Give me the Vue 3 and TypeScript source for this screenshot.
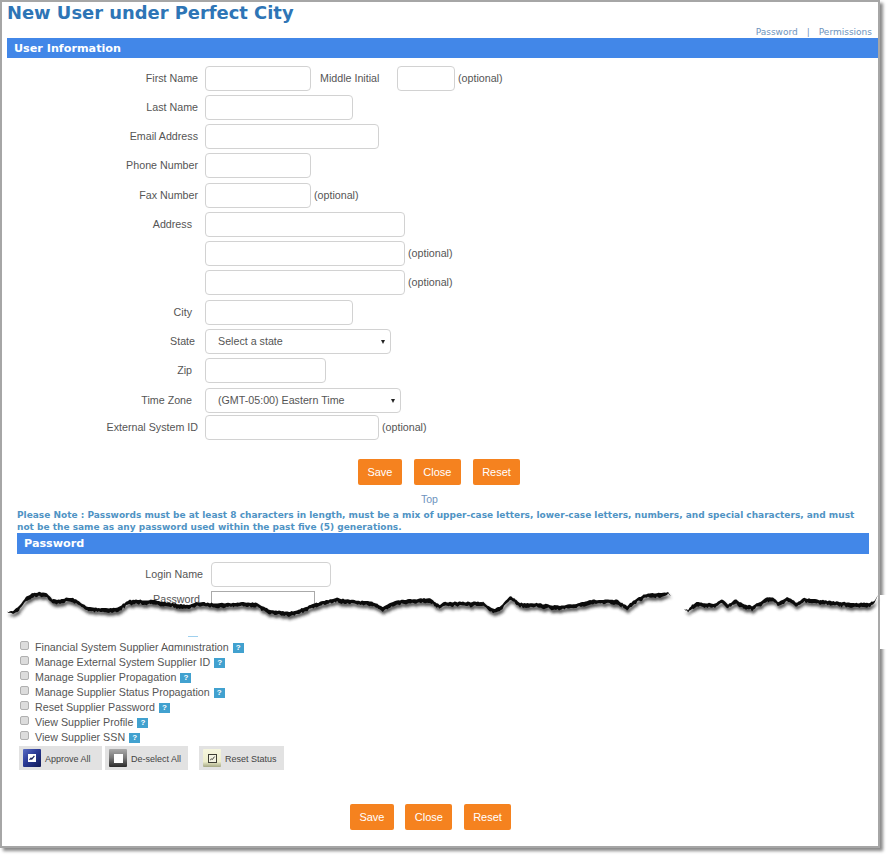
<script setup lang="ts">
interface Field { label: string; pad: number; width: number; kind?: string; text?: string; note?: string; extra: number }
const fields: Field[] = [
  { label: 'First Name', pad: 7, width: 106, extra: 0, kind: 'first' },
  { label: 'Last Name', pad: 7, width: 148, extra: 0 },
  { label: 'Email Address', pad: 7, width: 174, extra: 0 },
  { label: 'Phone Number', pad: 7, width: 106, extra: 0 },
  { label: 'Fax Number', pad: 7, width: 106, extra: 1, note: '(optional)' },
  { label: 'Address', pad: 13, width: 200, extra: 0 },
  { label: '', pad: 13, width: 200, extra: 0, note: '(optional)' },
  { label: '', pad: 13, width: 200, extra: 0, note: '(optional)' },
  { label: 'City', pad: 13, width: 148, extra: 1 },
  { label: 'State', pad: 10, width: 186, extra: 0, kind: 'select', text: 'Select a state' },
  { label: 'Zip', pad: 13, width: 121, extra: 0 },
  { label: 'Time Zone', pad: 13, width: 196, extra: 1, kind: 'select', text: '(GMT-05:00) Eastern Time' },
  { label: 'External System ID', pad: 7, width: 174, extra: -2, note: '(optional)' }
]
const perms = [
  'Financial System Supplier Administration',
  'Manage External System Supplier ID',
  'Manage Supplier Propagation',
  'Manage Supplier Status Propagation',
  'Reset Supplier Password',
  'View Supplier Profile',
  'View Supplier SSN'
]
type P = [number, number]
const seg1: P[] = [[7,612],[13,611],[20,605],[26,597],[33,593],[40,592],[47,593],[52,599],[57,600],[66,598],[73,598],[80,602],[87,607],[100,608],[117,608],[123,604],[130,600],[150,600],[165,602],[178,604],[190,605],[197,602],[210,603],[233,603],[245,602],[257,603],[264,607],[270,610],[280,611],[290,612],[300,609],[317,603],[327,600],[337,598],[350,600],[373,602],[378,604],[383,607],[390,603],[397,600],[415,599],[430,598],[435,602],[440,605],[444,602],[460,602],[483,602],[490,607],[495,609],[501,606],[510,596],[515,599],[520,603],[535,603],[560,606],[575,604],[590,600],[617,600],[622,603],[627,606],[633,601],[645,594],[668,592],[671,596]]
const seg2: P[] = [[684,609],[688,610],[692,605],[697,602],[715,604],[722,599],[728,605],[735,599],[743,604],[752,606],[760,602],[768,597],[773,597],[778,602],[788,597],[797,603],[803,598],[820,600],[840,602],[855,603],[870,603],[875,600],[878,595]]

let seed = 7
const rnd = (): number => {
  seed = (seed * 16807) % 2147483647
  return seed / 2147483647
}
const sample = (pts: P[]): P[] => {
  const out: P[] = []
  for (let i = 0; i < pts.length - 1; i++) {
    const [x0, y0] = pts[i]
    const [x1, y1] = pts[i + 1]
    for (let x = x0; x < x1; x += 1.5) {
      const t = (x - x0) / (x1 - x0)
      out.push([x, y0 + (y1 - y0) * t + (rnd() - 0.5) * 1.1])
    }
  }
  out.push(pts[pts.length - 1])
  return out
}
const fmt = (pts: P[]): string => pts.map(p => p[0].toFixed(1) + ' ' + p[1].toFixed(1)).join('L')
const band = (pts: P[]): string => {
  const s = sample(pts)
  const under: P[] = s.map((p, i) => {
    const edge = Math.min(i, s.length - 1 - i)
    const th = Math.min(edge * 0.7, 3.2 + rnd() * 1.8)
    return [p[0], p[1] + th] as P
  }).reverse()
  return 'M' + fmt(s) + 'L' + fmt(under) + 'Z'
}
const band1 = band(seg1)
const band2 = band(seg2)
const fill = 'M' + fmt(seg1) + 'L' + fmt(seg2) + 'L891 595L891 649L879 649L879 641L200 641L200 645L165 645L165 641L3 641L3 612Z'
</script>

<template>
  <div class="page">
    <div class="frame">
      <h1 class="title">New User under Perfect City</h1>
      <div class="links">
        <a>Password</a><span class="sep">|</span><a>Permissions</a>
      </div>
      <h2 class="bar">User Information</h2>
      <div class="form">
        <div
          v-for="(f, i) in fields"
          :key="i"
          class="row"
          :style="{ marginTop: f.extra + 'px' }"
        >
          <label class="label" :style="{ paddingRight: f.pad + 'px' }">{{ f.label }}</label>
          <span v-if="f.kind === 'select'" class="select" :style="{ width: f.width + 'px' }">{{ f.text }}</span>
          <input v-else class="input" type="text" :style="{ width: f.width + 'px' }" />
          <span v-if="f.note" class="note">{{ f.note }}</span>
          <template v-if="f.kind === 'first'">
            <label class="mid-label">Middle Initial</label>
            <input class="input mid" type="text" />
            <span class="note">(optional)</span>
          </template>
        </div>
      </div>
      <div class="buttons top-buttons">
        <button class="btn">Save</button>
        <button class="btn">Close</button>
        <button class="btn">Reset</button>
      </div>
      <a class="top-link">Top</a>
      <div class="inner">
        <p class="please">Please Note : Passwords must be at least 8 characters in length, must be a mix of upper-case letters, lower-case letters, numbers, and special characters, and must not be the same as any password used within the past five (5) generations.</p>
        <h2 class="bar bar-inner">Password</h2>
        <div class="login-row">
          <label class="login-label">Login Name</label>
          <input class="input login" type="text" />
        </div>
        <div class="login-row pass-row">
          <label class="login-label pass-label">Password</label>
          <input class="input pass" type="password" />
        </div>
      </div>
      <ul class="perms">
        <li v-for="p in perms" :key="p" class="perm">
          <input class="check" type="checkbox" />
          <span class="perm-text">{{ p }}</span>
          <span class="help">?</span>
        </li>
      </ul>
      <div class="actions">
        <button class="action">
          <span class="ico ico-blue">
            <svg width="8" height="8" viewBox="0 0 8 8"><rect width="8" height="8" fill="#fff" /><path d="M1.5 5.8L3 4.2L3.8 5L6.4 1.8" fill="none" stroke="#1b2560" stroke-width="1.2" /></svg>
          </span><span class="action-text">Approve All</span>
        </button>
        <button class="action">
          <span class="ico ico-gray">
            <svg width="9" height="9" viewBox="0 0 9 9"><rect width="9" height="9" fill="#fff" /></svg>
          </span><span class="action-text">De-select All</span>
        </button>
        <button class="action action-reset">
          <span class="ico ico-cream">
            <svg width="9" height="9" viewBox="0 0 9 9"><rect x=".5" y=".5" width="8" height="8" fill="#f3f3e2" stroke="#3d3d34" /><path d="M2.2 6L3.5 4.8L4.2 5.6L6.6 2.6" fill="none" stroke="#3d3d34" stroke-width="1" /></svg>
          </span><span class="action-text">Reset Status</span>
        </button>
      </div>
      <div class="buttons bottom-buttons">
        <button class="btn">Save</button>
        <button class="btn">Close</button>
        <button class="btn">Reset</button>
      </div>
    </div>
    <svg class="tear" width="891" height="859" viewBox="0 0 891 859" aria-hidden="true">
      <defs>
        <filter id="tb" x="-5%" y="-300%" width="110%" height="700%"><feGaussianBlur stdDeviation="1.6" /></filter>
      </defs>
      <path :d="fill" fill="#fff" />
      <rect x="878" y="594" width="2" height="56" fill="#a9a9a9" />
      <rect x="188" y="636" width="10" height="1" fill="#9fd0ee" />
      <g transform="translate(1 3)" filter="url(#tb)" opacity="0.8">
        <path :d="band1" fill="#222" />
        <path :d="band2" fill="#222" />
      </g>
      <path :d="band1" fill="#0b0b0b" />
      <path :d="band2" fill="#0b0b0b" />
    </svg>
  </div>
</template>

<style scoped>
.page {
  position: relative;
  width: 891px;
  height: 859px;
  overflow: hidden;
  background: #fff;
  font-family: "Liberation Sans", Arial, sans-serif;
  font-size: 10.7px;
  color: #555;
}
.frame {
  box-sizing: border-box;
  width: 880px;
  height: 848px;
  border: 2px solid #a6a6a6;
  box-shadow: 3px 3px 3px #8a8a8a;
  padding: 0 0 0 5px;
  background: #fff;
}
.title {
  margin: 0;
  height: 24px;
  font: bold 17.9px/22px "DejaVu Sans", Verdana, sans-serif;
  color: #2e75b6;
}
.links {
  display: flex;
  justify-content: flex-end;
  height: 12px;
  padding-right: 6px;
  font: 9px/12px "DejaVu Sans", Verdana, sans-serif;
  color: #6d93bd;
}
.sep { margin: 0 9px; }
.bar {
  margin: 0;
  height: 20px;
  padding-left: 7px;
  background: #4287e8;
  color: #fff;
  font: bold 11.2px/21px "DejaVu Sans", Verdana, sans-serif;
}
.form {
  display: flex;
  flex-direction: column;
  gap: 4px;
  padding-top: 8px;
}
.row {
  display: flex;
  align-items: center;
  height: 25px;
}
.label {
  box-sizing: border-box;
  width: 198px;
  padding-bottom: 2px;
  text-align: right;
  flex: none;
}
.input {
  box-sizing: border-box;
  height: 25px;
  margin: 0;
  padding: 0;
  border: 1px solid #d2d2d2;
  border-radius: 4px;
  background: #fff;
  outline: none;
}
.select {
  position: relative;
  box-sizing: border-box;
  height: 25px;
  line-height: 23px;
  padding-left: 12px;
  border: 1px solid #d2d2d2;
  border-radius: 4px;
  color: #555;
}
.select::after {
  content: "";
  position: absolute;
  right: 5px;
  top: 10px;
  border-left: 2.5px solid transparent;
  border-right: 2.5px solid transparent;
  border-top: 4px solid #222;
}
.note { margin-left: 3px; padding-bottom: 2px; }
.mid-label { margin-left: 9px; width: 77px; padding-bottom: 2px; flex: none; }
.mid { width: 58px; }
.buttons { display: flex; }
.btn {
  height: 26px;
  padding: 0 9.4px;
  border: none;
  border-radius: 2px;
  background: #f5821f;
  color: #fff;
  font: 11px "Liberation Sans", Arial, sans-serif;
}
.top-buttons { margin: 19px 0 0 351px; gap: 12px; }
.top-link {
  display: block;
  margin: 7px 0 0 414px;
  height: 16px;
  line-height: 15px;
  color: #6d93bd;
  font-size: 10.5px;
}
.inner { padding: 1px 0 0 10px; margin-right: 9px; }
.please {
  margin: 0;
  font: bold 9px/12px "DejaVu Sans", Verdana, sans-serif;
  color: #4f93c4;
}
.bar-inner { height: 21px; line-height: 21px; }
.login-row {
  display: flex;
  align-items: center;
  height: 25px;
  margin-top: 8px;
}
.pass-row { margin-top: 4px; align-items: flex-start; height: 20px; }
.login-label { width: 194px; padding: 0 8px 2px 0; text-align: right; flex: none; box-sizing: border-box; }
.pass-label { padding: 1px 11px 0 0; line-height: 14px; }
.login { width: 120px; }
.pass { width: 104px; border-color: #aaa; border-radius: 0; }
.perms { list-style: none; margin: 0; padding: 28px 0 0 13px; }
.perm { display: flex; height: 15px; align-items: center; }
.check {
  appearance: none;
  box-sizing: border-box;
  width: 9px;
  height: 9px;
  margin: -3px 6px 0 0;
  border: 1px solid #b0b0b0;
  border-radius: 2px;
  background: #dcdcdc;
  flex: none;
}
.help {
  width: 11px;
  height: 10px;
  margin: 2px 0 0 4px;
  background: #41a1cf;
  color: #fff;
  font: bold 8px/10px "Liberation Sans", Arial, sans-serif;
  text-align: center;
}
.actions { display: flex; margin: 2px 0 0 12px; }
.action {
  display: flex;
  align-items: center;
  width: 83px;
  height: 24px;
  padding: 0 0 0 4px;
  margin-right: 3px;
  border: none;
  background: #e2e2e2;
  color: #444;
  font: 9px "Liberation Sans", Arial, sans-serif;
  white-space: nowrap;
}
.action-text { padding-top: 2px; }
.action-reset { margin-left: 8px; width: 85px; }
.ico {
  box-sizing: border-box;
  display: flex;
  align-items: center;
  justify-content: center;
  width: 18px;
  height: 18px;
  margin-right: 4px;
  border-radius: 1px;
  flex: none;
}
.ico-blue { background: linear-gradient(135deg, #5a6dc4, #2a3a96 45%, #111a55); }
.ico-gray { background: linear-gradient(#aaa, #777 50%, #2a2a2a); }
.ico-cream { background: linear-gradient(#f6f6df, #eeeecb 70%, #a5a884); }
.bottom-buttons { margin: 34px 0 0 343px; gap: 11.5px; }
.tear {
  position: absolute;
  left: 0;
  top: 0;
  pointer-events: none;
}
</style>

<style>
body { margin: 0; background: #fff; }
</style>
